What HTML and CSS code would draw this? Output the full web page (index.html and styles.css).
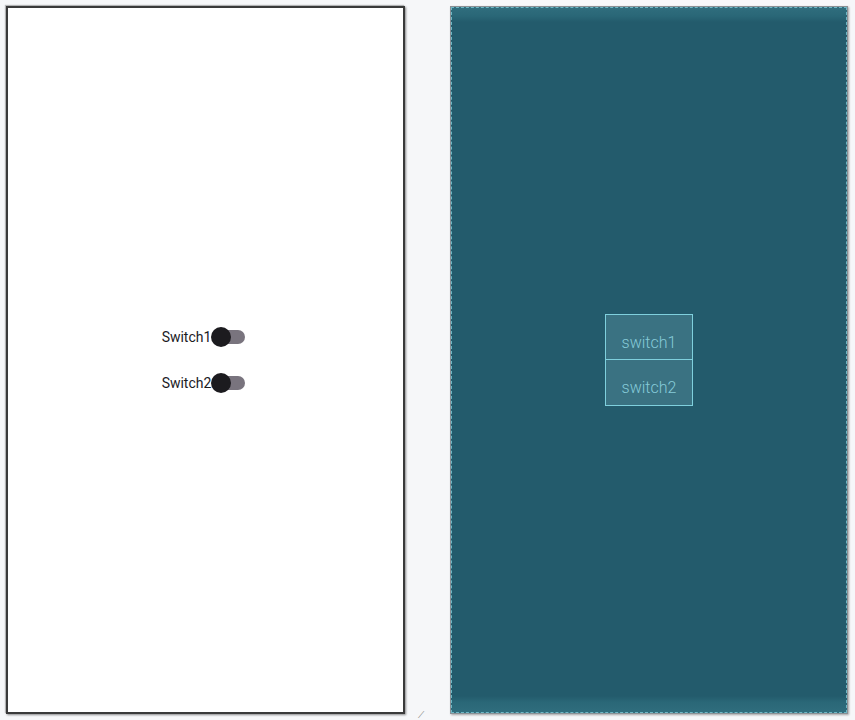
FILE: index.html
```html
<!DOCTYPE html>
<html>
<head>
<meta charset="utf-8">
<link rel="stylesheet" href="styles.css">
</head>
<body>
<div class="stage">
  <div class="device">
    <div class="stack">
      <div class="row">
        <span class="label">Switch1</span>
        <span class="switch"><span class="track"></span><span class="thumb"></span></span>
      </div>
      <div class="row">
        <span class="label">Switch2</span>
        <span class="switch"><span class="track"></span><span class="thumb"></span></span>
      </div>
    </div>
  </div>
  <div class="blueprint">
    <div class="bp-inner">
      <div class="bp-stack">
        <div class="bp-box">switch1</div>
        <div class="bp-box bp-second">switch2</div>
      </div>
    </div>
  </div>
</div>
<span class="grip">⟋</span>
</body>
</html>
```
FILE: styles.css
```css
html, body {
  margin: 0;
  padding: 0;
  background: #f6f7f9;
  font-family: Roboto, "Liberation Sans", sans-serif;
}
.stage {
  display: flex;
  gap: 45px;
  padding: 6px;
}
.device {
  width: 395px;
  height: 704px;
  background: #ffffff;
  border: 2px solid #3a3a3a;
  box-shadow: 1px 1px 2px rgba(0,0,0,0.45), -1px -1px 1px rgba(0,0,0,0.25);
  display: flex;
  align-items: center;
  justify-content: center;
}
.stack {
  display: flex;
  flex-direction: column;
  margin-left: -4px;
}
.row {
  height: 46px;
  display: flex;
  align-items: center;
}
.label {
  font-size: 14px;
  color: #1c1b1f;
}
.switch {
  position: relative;
  width: 34px;
  height: 20px;
  display: inline-block;
}
.track {
  position: absolute;
  left: 4px;
  top: 3px;
  width: 30px;
  height: 14px;
  border-radius: 7px;
  background: #79747e;
}
.thumb {
  position: absolute;
  left: 0;
  top: 0;
  width: 20px;
  height: 20px;
  border-radius: 50%;
  background: #1c1b1f;
}
.blueprint {
  width: 396px;
  height: 706px;
  border: 1px solid #8a8f94;
  box-shadow: 1px 1px 2px rgba(0,0,0,0.35);
  background: #235b6c;
}
.bp-inner {
  height: 704px;
  border: 1px dashed #6fb8c6;
  background: linear-gradient(#2f6d7d 0, #2a6777 8px, #235b6c 14px, #235b6c calc(100% - 16px), #2a6777 calc(100% - 10px), #2f6d7d 100%);
  display: flex;
  align-items: center;
  justify-content: center;
}
.bp-stack {
  display: flex;
  flex-direction: column;
  width: 88px;
}
.bp-box {
  height: 46px;
  border: 1px solid #7fd0dd;
  background: #3a7282;
  color: #86cbd9;
  font-size: 16px;
  font-weight: 300;
  display: flex;
  align-items: center;
  justify-content: center;
  padding-top: 10px;
  box-sizing: border-box;
}
.bp-second { border-top: none; }
.grip {
  position: absolute;
  left: 418px;
  top: 710px;
  font-size: 9px;
  color: #777;
}
```
